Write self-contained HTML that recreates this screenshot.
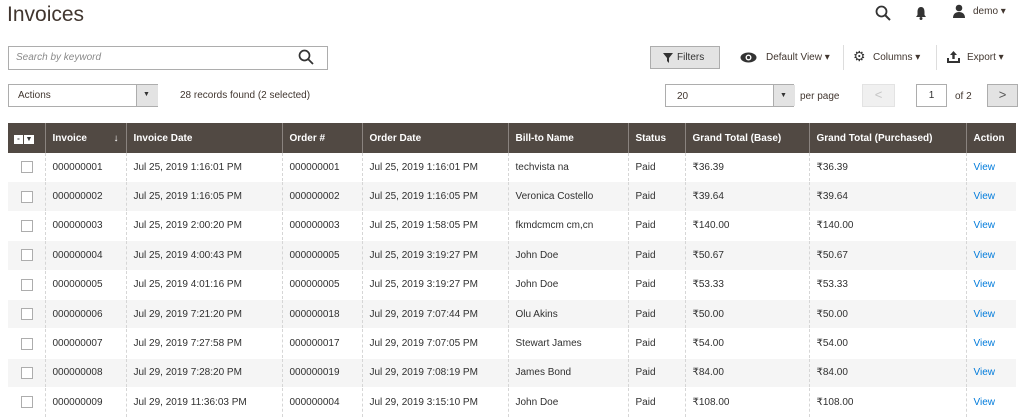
<!DOCTYPE html>
<html><head><meta charset="utf-8"><style>
body{margin:0;width:1024px;height:419px;overflow:hidden;background:#fff;font-family:"Liberation Sans",sans-serif;color:#303030;position:relative}
.a{position:absolute}
.t{font-size:11px;color:#41362f}
table{position:absolute;left:8px;top:123px;border-collapse:collapse;width:1008px;table-layout:fixed;font-size:10px}
th{background:#514943;color:#fff;height:30px;text-align:left;padding:0 7px;font-weight:bold;border-left:1px solid #8a837f;font-size:10px}
th:first-child{border-left:none}
td{height:28.4px;padding:0 7px;border-left:1px dashed #d6d6d6;color:#303030;white-space:nowrap;border-bottom:1px solid #fff}
td:first-child{border-left:none}
tr:nth-child(odd) td{background:#f5f5f5}
.cb{display:inline-block;width:10px;height:10px;border:1px solid #adadad;background:#fff;margin-left:6px;vertical-align:middle}
a{color:#007bdb;text-decoration:none}
</style></head><body>
<div class="a" style="left:7px;top:3px;font-size:21px;color:#41362f">Invoices</div>
<svg class="a" style="left:875px;top:5px" width="16" height="16" viewBox="0 0 16 16"><circle cx="6.5" cy="6.5" r="5" fill="none" stroke="#333" stroke-width="1.8"/><path d="M10 10l5 5" stroke="#333" stroke-width="2"/></svg>
<svg class="a" style="left:915px;top:6px" width="12" height="14" viewBox="0 0 12 14"><path d="M6 1C3 1 2.5 4 2.5 6v3L1 11h10L9.5 9V6C9.5 4 9 1 6 1z" fill="#333"/><circle cx="6" cy="12.5" r="1.5" fill="#333"/></svg>
<svg class="a" style="left:952px;top:4px" width="14" height="14" viewBox="0 0 14 14"><circle cx="7" cy="4" r="3.3" fill="#333"/><path d="M1 14c0-4 2.5-6 6-6s6 2 6 6z" fill="#333"/></svg>
<div class="a t" style="left:973px;top:6px;font-size:10px">demo ▾</div>

<div class="a" style="left:8px;top:46px;width:318px;height:22px;border:1px solid #adadad"></div>
<div class="a" style="left:16px;top:52px;font-size:10px;font-style:italic;color:#8a8a8a">Search by keyword</div>
<svg class="a" style="left:298px;top:49px" width="16" height="16" viewBox="0 0 16 16"><circle cx="6.5" cy="6.5" r="5" fill="none" stroke="#333" stroke-width="1.7"/><path d="M10 10l5 5" stroke="#333" stroke-width="1.8"/></svg>

<div class="a" style="left:8px;top:84px;width:148px;height:21px;border:1px solid #adadad"></div>
<div class="a" style="left:136px;top:85px;width:21px;height:21px;background:#e3e3e3;border-left:1px solid #adadad"></div>
<div class="a" style="left:143px;top:91px;font-size:7px;color:#333">▼</div>
<div class="a t" style="left:18px;top:90px;font-size:10px">Actions</div>
<div class="a t" style="left:180px;top:90px;font-size:10px">28 records found (2 selected)</div>

<div class="a" style="left:650px;top:46px;width:70px;height:23px;background:#e3e3e3;border:1px solid #adadad;box-sizing:border-box"></div>
<svg class="a" style="left:663px;top:53px" width="10" height="10" viewBox="0 0 10 10"><path d="M0 0h10L6 5v5L4 8V5z" fill="#333"/></svg>
<div class="a t" style="left:677px;top:52px;font-size:10px;color:#333">Filters</div>
<svg class="a" style="left:740px;top:52px" width="17" height="11" viewBox="0 0 17 11"><ellipse cx="8.5" cy="5.5" rx="8" ry="5" fill="#333"/><circle cx="8.5" cy="5.5" r="3" fill="#fff"/><circle cx="8.5" cy="5.5" r="1.6" fill="#333"/></svg>
<div class="a t" style="left:766px;top:52px;font-size:10px">Default View ▾</div>
<div class="a" style="left:843px;top:45px;width:1px;height:25px;background:#ddd"></div>
<div class="a" style="left:853px;top:48px;font-size:14px;color:#333">⚙</div>
<div class="a t" style="left:873px;top:52px;font-size:10px">Columns ▾</div>
<div class="a" style="left:936px;top:45px;width:1px;height:25px;background:#ddd"></div>
<svg class="a" style="left:947px;top:51px" width="13" height="12" viewBox="0 0 13 12"><path d="M6.5 0L3 4h2.3v4h2.4V4H10z" fill="#333"/><path d="M0 7v5h13V7h-2v3H2V7z" fill="#333"/></svg>
<div class="a t" style="left:967px;top:52px;font-size:10px">Export ▾</div>

<div class="a" style="left:665px;top:84px;width:129px;height:23px;border:1px solid #adadad;box-sizing:border-box"></div>
<div class="a" style="left:773px;top:85px;width:21px;height:21px;background:#e3e3e3;border-left:1px solid #adadad"></div>
<div class="a" style="left:780px;top:92px;font-size:7px;color:#333">▼</div>
<div class="a t" style="left:677px;top:91px;font-size:10px">20</div>
<div class="a t" style="left:800px;top:91px;font-size:10px">per page</div>
<div class="a" style="left:862px;top:84px;width:33px;height:23px;background:#f0f0f0;border:1px solid #e3e3e3;box-sizing:border-box;color:#c5c5c5;text-align:center;font-size:13px;line-height:20px">&lt;</div>
<div class="a" style="left:916px;top:84px;width:31px;height:23px;border:1px solid #adadad;box-sizing:border-box;text-align:center;font-size:10px;line-height:21px">1</div>
<div class="a t" style="left:955px;top:91px;font-size:10px">of 2</div>
<div class="a" style="left:987px;top:84px;width:31px;height:23px;background:#e3e3e3;border:1px solid #adadad;box-sizing:border-box;color:#555;text-align:center;font-size:13px;line-height:20px">&gt;</div>

<table>
<colgroup><col style="width:37px"><col style="width:81px"><col style="width:156px"><col style="width:80px"><col style="width:146px"><col style="width:120px"><col style="width:57px"><col style="width:124px"><col style="width:157px"><col style="width:50px"></colgroup>
<tr><th style="padding:0 6px"><span style="display:inline-block;width:9px;height:9px;background:#fff;color:#333;font-size:8px;line-height:8px;text-align:center">-</span><span style="display:inline-block;width:10px;height:9px;background:#fff;margin-left:1px;color:#333;font-size:7px;line-height:9px;text-align:center">▼</span></th><th>Invoice<span style="float:right;font-weight:normal">↓</span></th><th>Invoice Date</th><th>Order #</th><th>Order Date</th><th>Bill-to Name</th><th>Status</th><th>Grand Total (Base)</th><th>Grand Total (Purchased)</th><th>Action</th></tr>
<tr><td><span class="cb"></span></td><td>000000001</td><td>Jul 25, 2019 1:16:01 PM</td><td>000000001</td><td>Jul 25, 2019 1:16:01 PM</td><td>techvista na</td><td>Paid</td><td>₹36.39</td><td>₹36.39</td><td><a>View</a></td></tr>
<tr><td><span class="cb"></span></td><td>000000002</td><td>Jul 25, 2019 1:16:05 PM</td><td>000000002</td><td>Jul 25, 2019 1:16:05 PM</td><td>Veronica Costello</td><td>Paid</td><td>₹39.64</td><td>₹39.64</td><td><a>View</a></td></tr>
<tr><td><span class="cb"></span></td><td>000000003</td><td>Jul 25, 2019 2:00:20 PM</td><td>000000003</td><td>Jul 25, 2019 1:58:05 PM</td><td>fkmdcmcm cm,cn</td><td>Paid</td><td>₹140.00</td><td>₹140.00</td><td><a>View</a></td></tr>
<tr><td><span class="cb"></span></td><td>000000004</td><td>Jul 25, 2019 4:00:43 PM</td><td>000000005</td><td>Jul 25, 2019 3:19:27 PM</td><td>John Doe</td><td>Paid</td><td>₹50.67</td><td>₹50.67</td><td><a>View</a></td></tr>
<tr><td><span class="cb"></span></td><td>000000005</td><td>Jul 25, 2019 4:01:16 PM</td><td>000000005</td><td>Jul 25, 2019 3:19:27 PM</td><td>John Doe</td><td>Paid</td><td>₹53.33</td><td>₹53.33</td><td><a>View</a></td></tr>
<tr><td><span class="cb"></span></td><td>000000006</td><td>Jul 29, 2019 7:21:20 PM</td><td>000000018</td><td>Jul 29, 2019 7:07:44 PM</td><td>Olu Akins</td><td>Paid</td><td>₹50.00</td><td>₹50.00</td><td><a>View</a></td></tr>
<tr><td><span class="cb"></span></td><td>000000007</td><td>Jul 29, 2019 7:27:58 PM</td><td>000000017</td><td>Jul 29, 2019 7:07:05 PM</td><td>Stewart James</td><td>Paid</td><td>₹54.00</td><td>₹54.00</td><td><a>View</a></td></tr>
<tr><td><span class="cb"></span></td><td>000000008</td><td>Jul 29, 2019 7:28:20 PM</td><td>000000019</td><td>Jul 29, 2019 7:08:19 PM</td><td>James Bond</td><td>Paid</td><td>₹84.00</td><td>₹84.00</td><td><a>View</a></td></tr>
<tr><td><span class="cb"></span></td><td>000000009</td><td>Jul 29, 2019 11:36:03 PM</td><td>000000004</td><td>Jul 29, 2019 3:15:10 PM</td><td>John Doe</td><td>Paid</td><td>₹108.00</td><td>₹108.00</td><td><a>View</a></td></tr>
</table>
</body></html>
